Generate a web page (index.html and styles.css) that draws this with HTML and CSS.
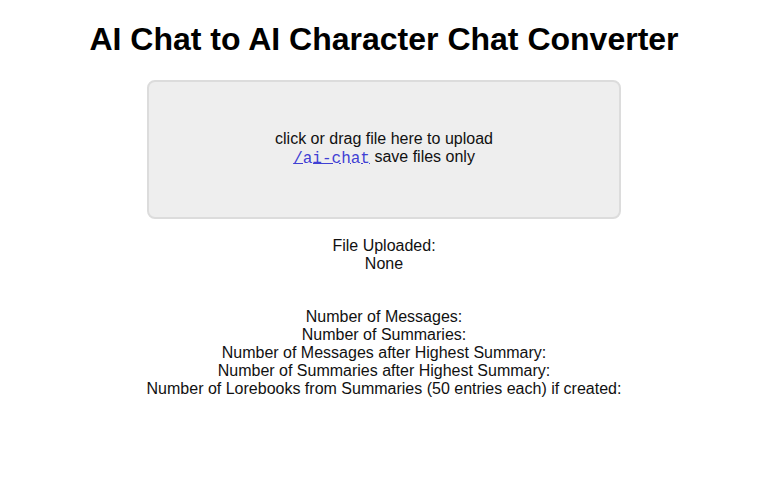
FILE: index.html
```html
<!DOCTYPE html>
<html>
<head>
<meta charset="utf-8">
<link rel="stylesheet" href="styles.css">
</head>
<body>
<h1 class="title">AI Chat to AI Character Chat Converter</h1>
<div class="dropzone">
  <div class="drop-text">click or drag file here to upload</div>
  <div class="drop-text"><a class="link" href="#"><code class="code">/ai-chat</code></a> save files only</div>
</div>
<div class="info">
  <div>File Uploaded:</div>
  <div>None</div>
</div>
<div class="stats">
  <div>Number of Messages:</div>
  <div>Number of Summaries:</div>
  <div>Number of Messages after Highest Summary:</div>
  <div>Number of Summaries after Highest Summary:</div>
  <div>Number of Lorebooks from Summaries (50 entries each) if created:</div>
</div>
</body>
</html>
```
FILE: styles.css
```css
html, body {
  margin: 0;
  padding: 0;
  background: #fff;
}
body {
  font-family: "Liberation Sans", Arial, sans-serif;
  font-size: 16px;
  line-height: 18px;
  color: #111;
  text-align: center;
  display: flex;
  flex-direction: column;
  align-items: center;
}
.title {
  font-size: 32px;
  line-height: 37px;
  font-weight: bold;
  margin: 21px 0 22px 0;
  color: #000;
}
.dropzone {
  box-sizing: border-box;
  width: 474px;
  height: 139px;
  padding-bottom: 3px;
  border: 2px solid #dcdcdc;
  border-radius: 8px;
  background: #eeeeee;
  display: flex;
  flex-direction: column;
  justify-content: center;
  align-items: center;
}
.link {
  color: #4040d4;
}
.code {
  font-family: "Liberation Mono", "Courier New", monospace;
  font-size: 16px;
  position: relative;
  top: 1px;
}
.info {
  margin-top: 18px;
}
.stats {
  margin-top: 35px;
}
```
